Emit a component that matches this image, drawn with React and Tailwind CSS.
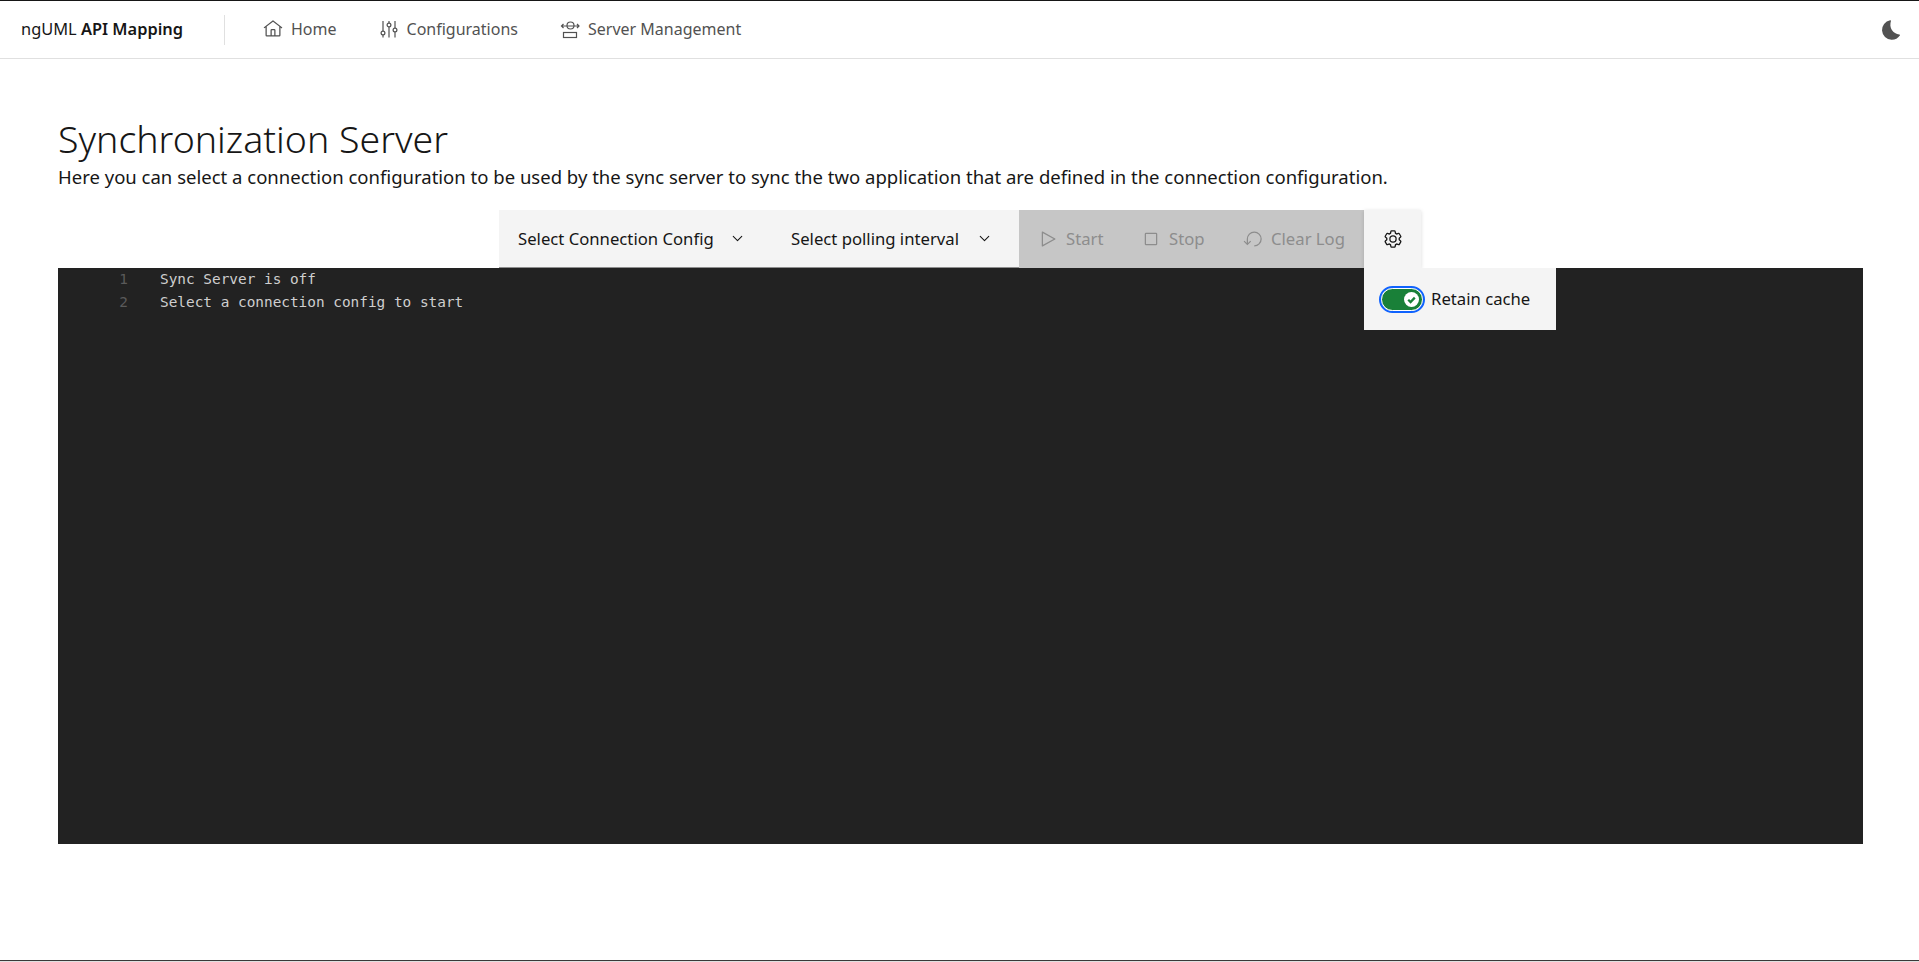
import React from "react";
import { ChevronDown } from "lucide-react";

const uiFont = "font-['Noto_Sans',sans-serif]";

const CarbonIcon = ({ className, children }) => (
  <svg viewBox="0 0 32 32" fill="currentColor" className={className}>
    {children}
  </svg>
);

const HomeIcon = () => (
  <CarbonIcon className="w-5 h-5">
    <path d="M16.6123,2.2138a1.01,1.01,0,0,0-1.2427,0L1,13.4194l1.2427,1.5717L4,13.6209V26a2.0041,2.0041,0,0,0,2,2H26a2.0037,2.0037,0,0,0,2-2V13.63L29.7573,15,31,13.4282ZM18,26H14V18h4Zm2,0V18a2.0023,2.0023,0,0,0-2-2H14a2.002,2.002,0,0,0-2,2v8H6V12.0615l10-7.79,10,7.8005V26Z" />
  </CarbonIcon>
);

const AdjustIcon = () => (
  <svg viewBox="0 0 20 20" fill="none" stroke="currentColor" strokeWidth="1.2" className="w-5 h-5">
    <path d="M4 2V12M4 16V18.5M10 2V4M10 8V18.5M16 2V9M16 13V18.5" />
    <circle cx="4" cy="14" r="1.9" />
    <circle cx="10" cy="6" r="1.9" />
    <circle cx="16" cy="11" r="1.9" />
  </svg>
);

const ServerIcon = () => (
  <svg viewBox="0 0 20 20" fill="none" stroke="currentColor" strokeWidth="1.2" className="w-5 h-5">
    <rect x="3.5" y="13.5" width="13" height="5" />
    <path d="M1.5 7H19M3.5 5L1.5 7L3.5 9M17 5L19 7L17 9" />
    <circle cx="10.5" cy="6.5" r="3.5" />
  </svg>
);

const GearIcon = () => (
  <CarbonIcon className="w-5 h-5">
    <path d="M27,16.76c0-.25,0-.5,0-.76s0-.51,0-.77l1.92-1.68A2,2,0,0,0,29.3,11L26.94,7a2,2,0,0,0-1.73-1,2,2,0,0,0-.64.1l-2.43.82a11.35,11.35,0,0,0-1.31-.75l-.51-2.52a2,2,0,0,0-2-1.61H13.64a2,2,0,0,0-2,1.61l-.51,2.52a11.48,11.48,0,0,0-1.32.75L7.43,6.06A2,2,0,0,0,6.79,6,2,2,0,0,0,5.06,7L2.7,11a2,2,0,0,0,.41,2.51L5,15.24c0,.25,0,.5,0,.76s0,.51,0,.77L3.11,18.45A2,2,0,0,0,2.7,21L5.06,25a2,2,0,0,0,1.73,1,2,2,0,0,0,.64-.1l2.43-.82a11.35,11.35,0,0,0,1.31.75l.51,2.52a2,2,0,0,0,2,1.61h4.72a2,2,0,0,0,2-1.61l.51-2.52a11.48,11.48,0,0,0,1.32-.75l2.42.82a2,2,0,0,0,.64.1,2,2,0,0,0,1.73-1L29.3,21a2,2,0,0,0-.41-2.51ZM25.21,24l-3.43-1.16a8.86,8.86,0,0,1-2.71,1.57L18.36,28H13.64l-.71-3.55a9.36,9.36,0,0,1-2.7-1.57L6.79,24,4.43,20l2.72-2.4a8.9,8.9,0,0,1,0-3.13L4.43,12,6.79,8l3.43,1.16a8.86,8.86,0,0,1,2.71-1.57L13.64,4h4.72l.71,3.55a9.36,9.36,0,0,1,2.7,1.57L25.21,8,27.57,12l-2.72,2.4a8.9,8.9,0,0,1,0,3.13L27.57,20Z" />
    <path d="M16,22a6,6,0,1,1,6-6A5.94,5.94,0,0,1,16,22Zm0-10a3.91,3.91,0,0,0-4,4,3.91,3.91,0,0,0,4,4,3.91,3.91,0,0,0,4-4A3.91,3.91,0,0,0,16,12Z" />
  </CarbonIcon>
);

const PlayIcon = () => (
  <CarbonIcon className="w-5 h-5">
    <path d="M7,28a1,1,0,0,1-1-1V5a1,1,0,0,1,1.4819-.8763l20,11a1,1,0,0,1,0,1.7525l-20,11A1.0005,1.0005,0,0,1,7,28ZM8,6.6909V25.3091L24.9248,16Z" />
  </CarbonIcon>
);

const StopIcon = () => (
  <CarbonIcon className="w-5 h-5">
    <path d="M24,6H8A2,2,0,0,0,6,8V24a2,2,0,0,0,2,2H24a2,2,0,0,0,2-2V8A2,2,0,0,0,24,6Zm0,18H8V8H24Z" />
  </CarbonIcon>
);

const ResetIcon = () => (
  <CarbonIcon className="w-5 h-5">
    <path d="M18,28A12,12,0,1,0,6,16v6.2L2.4,18.6,1,20l6,6,6-6-1.4-1.4L8,22.2V16H8A10,10,0,1,1,18,26Z" />
  </CarbonIcon>
);

const MoonIcon = () => (
  <CarbonIcon className="w-6 h-6">
    <path d="M14.98,3a1.0024,1.0024,0,0,0-.1746.0156A13.0959,13.0959,0,0,0,16.63,28.9973c.1641.006.3282,0,.4909,0a13.0724,13.0724,0,0,0,10.702-5.5556,1.0094,1.0094,0,0,0-.7833-1.5644A13.08,13.08,0,0,1,15.8892,4.38,1.0018,1.0018,0,0,0,14.98,3Z" />
  </CarbonIcon>
);

const navItems = [
  { label: "Home", icon: <HomeIcon /> },
  { label: "Configurations", icon: <AdjustIcon /> },
  { label: "Server Management", icon: <ServerIcon /> },
];

const Header = () => (
  <header className="h-[58px] shrink-0 flex items-center bg-white border-b border-[#e0e0e0]">
    <div className="w-[225px] h-[30px] flex items-center pl-[21px] border-r border-[#e0e0e0] text-[16.4px] text-[#161616]">
      ngUML&nbsp;<span className="font-semibold">API Mapping</span>
    </div>
    <nav className="flex items-center pl-[38px] gap-[42px] text-[16px] leading-[23px] pb-[1px] text-[#525252]">
      {navItems.map((item) => (
        <a key={item.label} className="flex items-center gap-[8px]">
          {item.icon}
          {item.label}
        </a>
      ))}
    </nav>
    <div className="ml-auto pr-[16px] text-[#525252]">
      <MoonIcon />
    </div>
  </header>
);

const SelectBox = ({ label, className }) => (
  <div className={`h-[58px] flex items-center bg-[#f4f4f4] border-b border-[#8d8d8d] pl-[19px] pr-[26px] text-[#161616] ${className}`}>
    <span className="flex-1">{label}</span>
    <ChevronDown size={17} strokeWidth={1.5} />
  </div>
);

const DisabledButton = ({ label, icon, className }) => (
  <div className={`flex items-center gap-[8px] ${className}`}>
    {icon}
    {label}
  </div>
);

const Toggle = () => (
  <span className="relative w-[42px] h-[23px] rounded-full bg-[#198038] outline-2 outline-[#0f62fe] border border-white box-border shrink-0">
    <svg viewBox="0 0 16 16" className="absolute right-[3px] top-[3px] w-[15px] h-[15px]">
      <circle cx="8" cy="8" r="8" fill="#fff" />
      <path d="M4.5 8.2L7 10.7L11.5 6" fill="none" stroke="#198038" strokeWidth="2.4" />
    </svg>
  </span>
);

const Toolbar = () => (
  <div className="flex justify-center text-[16.7px]">
    <div className="flex mr-[1px]">
      <SelectBox label="Select Connection Config" className="w-[273px]" />
      <SelectBox label="Select polling interval" className="w-[247px]" />
      <div className="h-[58px] w-[345px] bg-[#c6c6c6] text-[#8d8d8d] flex items-center pl-[19px]">
        <DisabledButton label="Start" icon={<PlayIcon />} className="w-[103px]" />
        <DisabledButton label="Stop" icon={<StopIcon />} className="w-[102px]" />
        <DisabledButton label="Clear Log" icon={<ResetIcon />} />
      </div>
      <div className="relative w-[57px] h-[58px] bg-[#f4f4f4] flex items-center justify-center text-[#161616] shadow-[0_1px_4px_rgba(0,0,0,0.15)]">
        <GearIcon />
        <div className="absolute left-0 top-[58px] w-[192px] h-[62px] bg-[#f4f4f4] flex items-center pl-[17px] gap-[8px] z-10">
          <Toggle />
          <span>Retain cache</span>
        </div>
        <div className="absolute left-0 right-0 top-[52px] h-[6px] bg-[#f4f4f4] z-20" />
      </div>
    </div>
  </div>
);

const logLines = ["Sync Server is off", "Select a connection config to start"];

const LogView = () => (
  <div className="h-[576px] bg-[#222222] font-['DejaVu_Sans_Mono',monospace] text-[14.4px] leading-[23px]">
    {logLines.map((line, i) => (
      <div key={i} className="flex">
        <span className="w-[70px] text-right text-[#5a5a5a]">{i + 1}</span>
        <span className="pl-[32px] text-[#cfcfcf] whitespace-pre">{line}</span>
      </div>
    ))}
  </div>
);

export default function App() {
  return (
    <div className={`h-[962px] flex flex-col bg-white border-t border-[#161616] ${uiFont}`}>
      <Header />
      <main className="flex-1 pl-[58px] pr-[56px] pt-[58px]">
        <h1 className="text-[37.5px] leading-[44px] font-light text-[#161616]">Synchronization Server</h1>
        <p className="text-[18.52px] leading-[24px] text-[#161616] mt-[4px] whitespace-nowrap">
          Here you can select a connection configuration to be used by the sync server to sync the two application that are defined in the connection configuration.
        </p>
        <div className="mt-[21px]">
          <Toolbar />
          <LogView />
        </div>
      </main>
      <div className="h-[2px] bg-[#393939] border-b border-[#e0e0e0]" />
    </div>
  );
}
